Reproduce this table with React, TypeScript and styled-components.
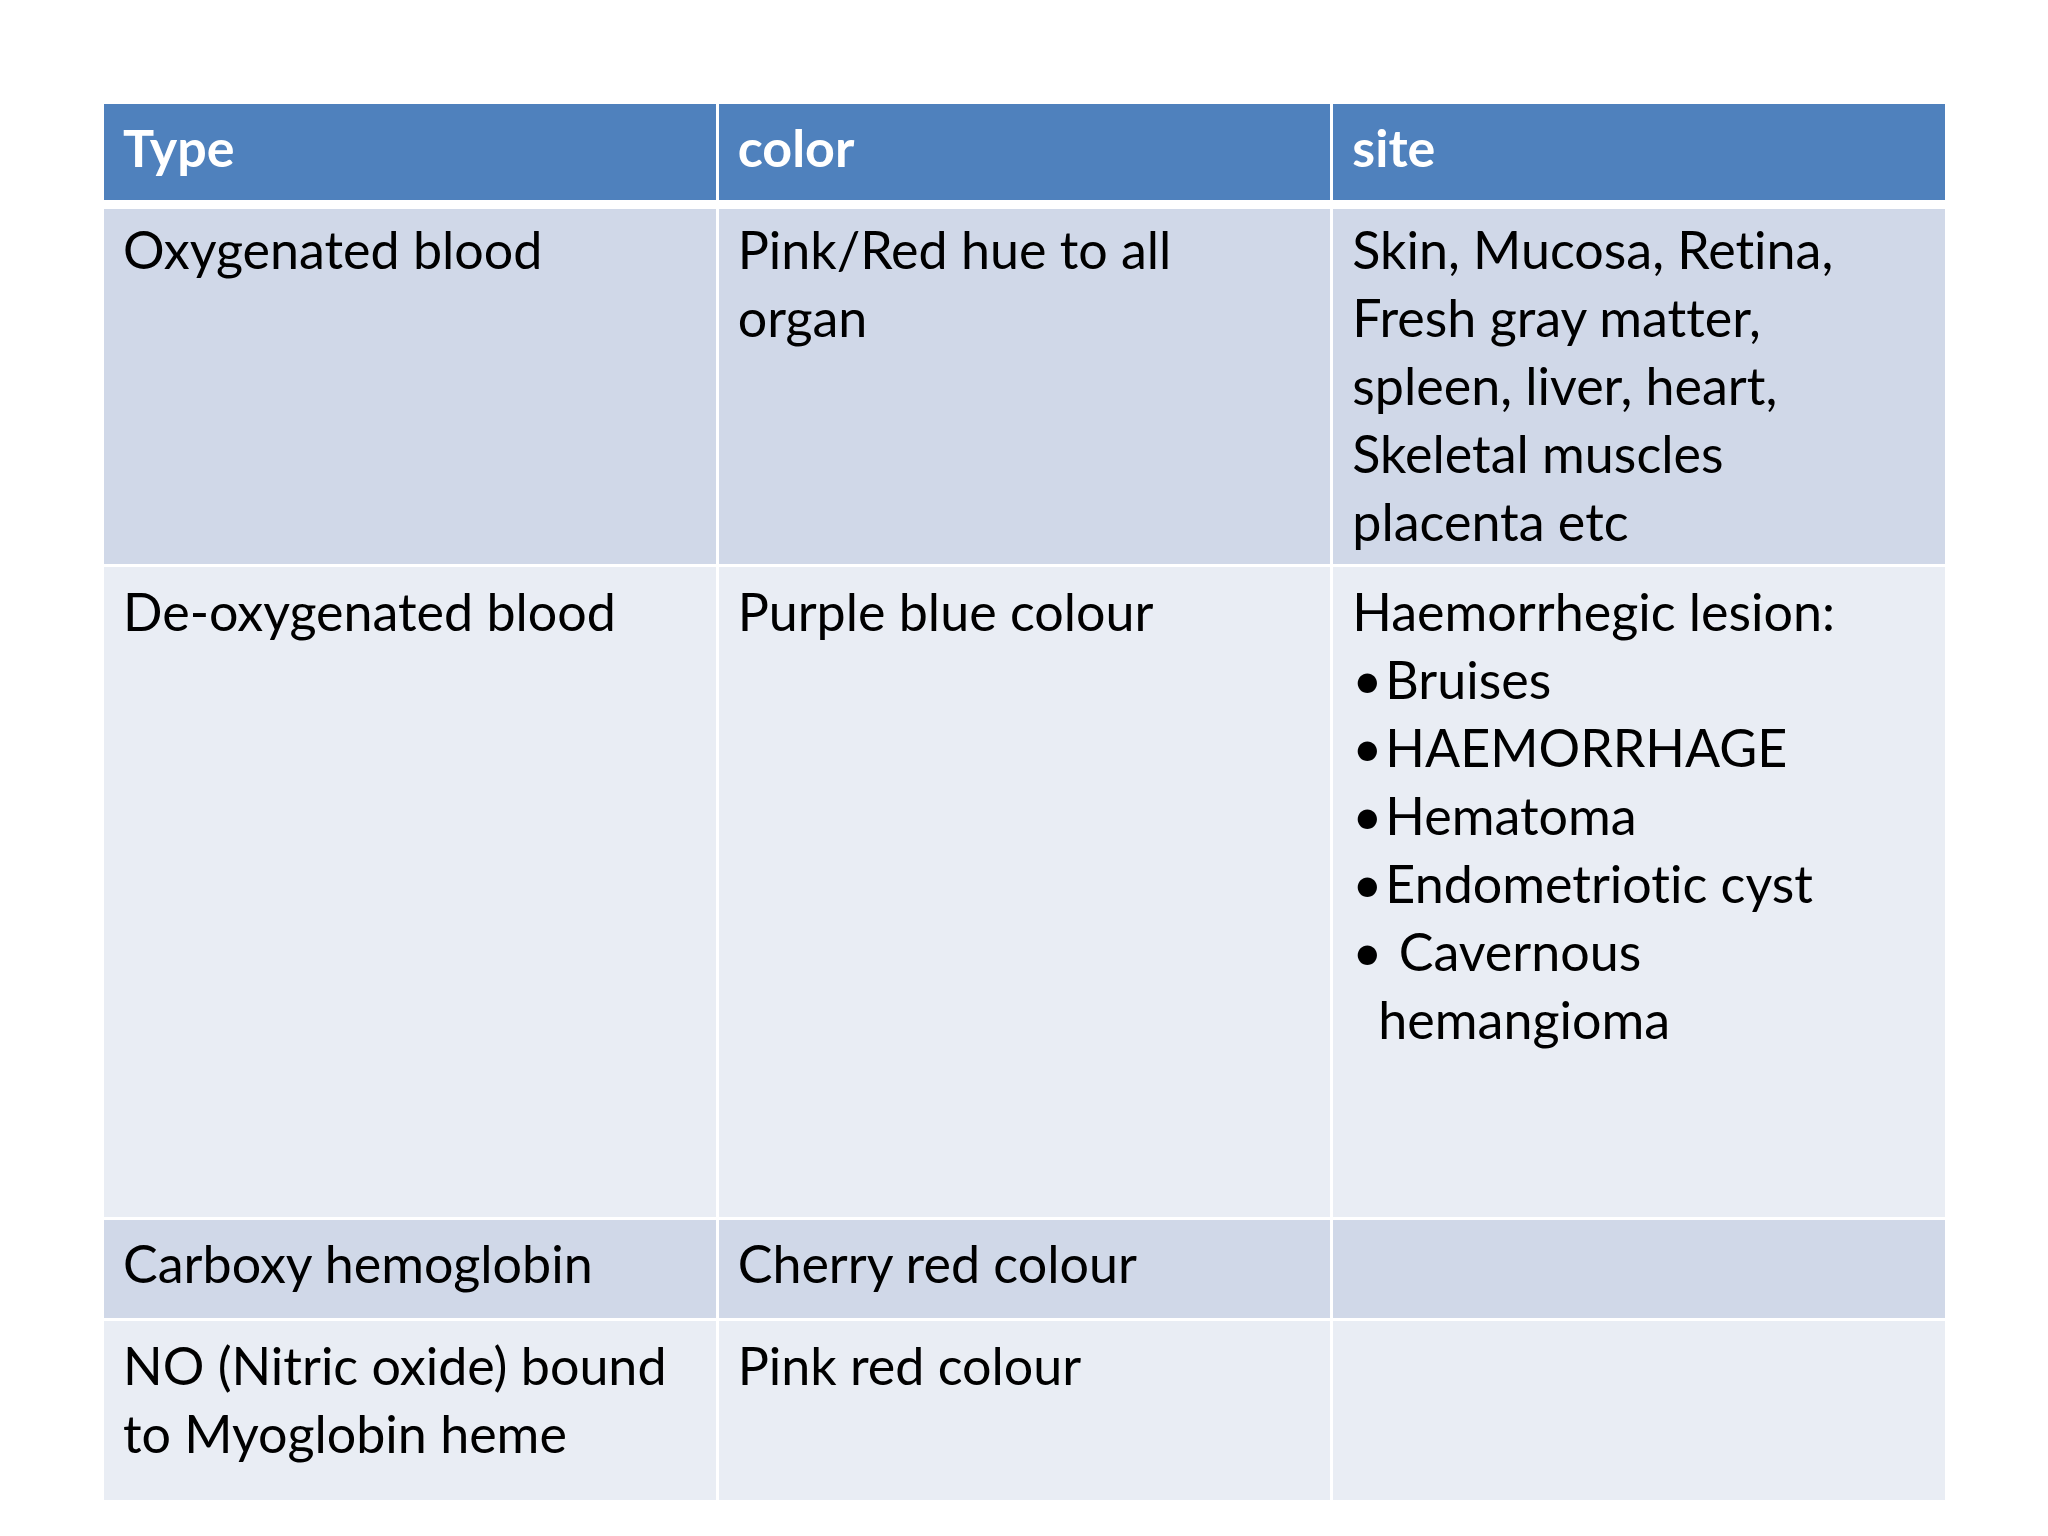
import React from "react";
import styled, { createGlobalStyle } from "styled-components";

type Tone = "head" | "band" | "plain";

type RowData = {
  tone: Tone;
  height: number;
  pad: number;
  cells: React.ReactNode[];
};

const tones: Record<Tone, string> = {
  head: "#4F81BD",
  band: "#D0D8E8",
  plain: "#E9EDF4",
};

const GlobalStyle = createGlobalStyle`
  html, body {
    margin: 0;
    padding: 0;
    background: #ffffff;
  }
  body {
    font-family: Lato, "Open Sans", "Liberation Sans", sans-serif;
    font-variant-ligatures: none;
  }
`;

const Page = styled.div`
  width: 2048px;
  height: 1536px;
  box-sizing: border-box;
  padding: 104px 0 0 104px;
  background: #ffffff;
`;

const Table = styled.div`
  width: 1841px;
  display: flex;
  flex-direction: column;
`;

const Row = styled.div<{ $height: number; $head?: boolean }>`
  display: grid;
  grid-template-columns: repeat(3, 1fr);
  column-gap: 3px;
  height: ${(p) => p.$height}px;
  margin-bottom: ${(p) => (p.$head ? 9 : 3)}px;
`;

const Cell = styled.div<{ $tone: Tone; $pad: number }>`
  background: ${(p) => tones[p.$tone]};
  color: ${(p) => (p.$tone === "head" ? "#ffffff" : "#000000")};
  font-weight: ${(p) => (p.$tone === "head" ? 700 : 400)};
  font-size: 52px;
  line-height: 68px;
  padding: ${(p) => p.$pad}px 16px 0 19px;
  box-sizing: border-box;
  overflow: hidden;
`;

const Item = styled.div<{ $indent: number }>`
  padding-left: ${(p) => p.$indent}px;
  text-indent: -${(p) => p.$indent}px;
`;

const Bullet = styled.span`
  display: inline-block;
  width: 33px;
  text-indent: 0;
`;

const lesions = ["Bruises", "HAEMORRHAGE", "Hematoma", "Endometriotic cyst"];

const rows: RowData[] = [
  { tone: "head", height: 96, pad: 9, cells: ["Type", "color", "site"] },
  {
    tone: "band",
    height: 355,
    pad: 6,
    cells: [
      "Oxygenated blood",
      <>Pink/Red hue to all<br />organ</>,
      <>
        Skin, Mucosa, Retina,<br />
        Fresh gray matter,<br />
        spleen, liver, heart,<br />
        Skeletal muscles<br />
        placenta etc
      </>,
    ],
  },
  {
    tone: "plain",
    height: 650,
    pad: 10,
    cells: [
      "De-oxygenated blood",
      "Purple blue colour",
      <>
        Haemorrhegic lesion:
        {lesions.map((l) => (
          <Item key={l} $indent={26}>
            <Bullet>•</Bullet>
            {l}
          </Item>
        ))}
        <Item $indent={26}>
          <Bullet>•</Bullet>&nbsp;Cavernous<br />hemangioma
        </Item>
      </>,
    ],
  },
  { tone: "band", height: 98, pad: 9, cells: ["Carboxy hemoglobin", "Cherry red colour", ""] },
  {
    tone: "plain",
    height: 179,
    pad: 10,
    cells: [<>NO (Nitric oxide) bound<br />to Myoglobin heme</>, "Pink red colour", ""],
  },
];

export default function App() {
  return (
    <>
      <GlobalStyle />
      <Page>
        <Table>
          {rows.map((r, i) => (
            <Row key={i} $height={r.height} $head={r.tone === "head"}>
              {r.cells.map((c, j) => (
                <Cell key={j} $tone={r.tone} $pad={r.pad}>
                  {c}
                </Cell>
              ))}
            </Row>
          ))}
        </Table>
      </Page>
    </>
  );
}
